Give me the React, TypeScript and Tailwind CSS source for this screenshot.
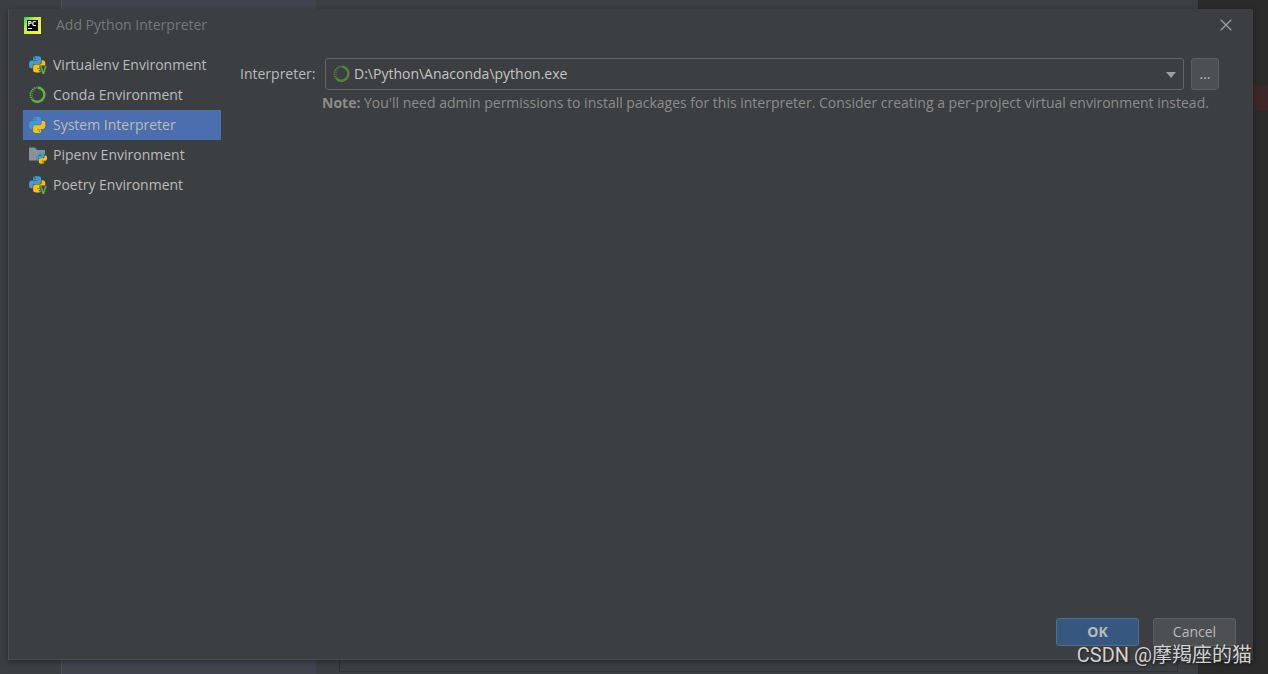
import React, { useState } from 'react';
import { X } from 'lucide-react';
import { clsx } from 'clsx';

type IconType = 'virtualenv' | 'conda' | 'system' | 'pipenv';

interface EnvironmentItem {
  id: string;
  label: string;
  icon: IconType;
}

const ENVIRONMENTS: EnvironmentItem[] = [
  { id: 'virtualenv', label: 'Virtualenv Environment', icon: 'virtualenv' },
  { id: 'conda', label: 'Conda Environment', icon: 'conda' },
  { id: 'system', label: 'System Interpreter', icon: 'system' },
  { id: 'pipenv', label: 'Pipenv Environment', icon: 'pipenv' },
  { id: 'poetry', label: 'Poetry Environment', icon: 'virtualenv' },
];

const SNAKE_TOP =
  'M14.25.18l.9.2.73.26.59.3.45.32.34.34.25.34.16.33.1.3.04.26.02.2-.01.13V8.5l-.05.63-.13.55-.21.46-.26.38-.3.31-.33.25-.35.19-.35.14-.33.1-.3.07-.26.04-.21.02H8.77l-.69.05-.59.14-.5.22-.41.27-.33.32-.27.35-.2.36-.15.37-.1.35-.07.32-.04.27-.02.21v3.06H3.17l-.21-.03-.28-.07-.32-.12-.35-.18-.36-.26-.36-.36-.35-.46-.32-.59-.28-.73-.21-.88-.14-1.05-.05-1.23.06-1.22.16-1.04.24-.87.32-.71.36-.57.4-.44.42-.33.42-.24.4-.16.36-.1.32-.05.24-.01h.16l.06.01h8.16v-.83H6.18l-.01-2.75-.02-.37.05-.34.11-.31.17-.28.25-.26.31-.23.38-.2.44-.18.51-.15.58-.12.64-.1.71-.06.77-.04.84-.02 1.27.05zm-6.3 1.98l-.23.33-.08.41.08.41.23.34.33.22.41.09.41-.09.33-.22.23-.34.08-.41-.08-.41-.23-.33-.33-.22-.41-.09-.41.09z';

const SNAKE_BOTTOM =
  'M21.04 6.11l.28.06.32.12.35.18.36.27.36.35.35.47.32.59.28.73.21.88.14 1.04.05 1.23-.06 1.23-.16 1.04-.24.86-.32.71-.36.57-.4.45-.42.33-.42.24-.4.16-.36.09-.32.05-.24.02-.16-.01h-8.22v.82h5.84l.01 2.76.02.36-.05.34-.11.31-.17.29-.25.25-.31.24-.38.2-.44.17-.51.15-.58.13-.64.09-.71.07-.77.04-.84.01-1.27-.04-1.07-.14-.9-.2-.73-.25-.59-.3-.45-.33-.34-.34-.25-.34-.16-.33-.1-.3-.04-.25-.02-.2.01-.13v-5.34l.05-.64.13-.54.21-.46.26-.38.3-.32.33-.24.35-.2.35-.14.33-.1.3-.06.26-.04.21-.02.13-.01h5.84l.69-.05.59-.14.5-.21.41-.28.33-.32.27-.35.2-.36.15-.36.1-.35.07-.32.04-.28.02-.21V6.07h2.09l.14.01zm-6.47 14.25l-.23.33-.08.41.08.41.23.33.33.23.41.08.41-.08.33-.23.23-.33.08-.41-.08-.41-.23-.33-.33-.23-.41-.08-.41.08z';

const Snakes: React.FC<{ transform?: string }> = ({ transform }) => (
  <g transform={transform}>
    <path d={SNAKE_TOP} fill="#3f9bd0" />
    <path d={SNAKE_BOTTOM} fill="#fac30b" />
  </g>
);

const CondaRing: React.FC<{ className?: string }> = ({ className }) => (
  <svg viewBox="0 0 18 18" className={className} fill="none" aria-hidden="true">
    <path d="M8.6 1.7A7 7 0 1 1 3.6 13.8" stroke="#62b543" strokeWidth="2.3" />
    <path d="M3.6 13.8A7 7 0 0 1 7.8 1.7" stroke="#62b543" strokeWidth="1.8" strokeDasharray="1.4 0.8" />
    <path d="M4.6 12.2A5.4 5.4 0 0 1 6 3.8" stroke="#62b543" strokeWidth="0.9" strokeDasharray="1 1.2" />
  </svg>
);

const EnvironmentIcon: React.FC<{ type: IconType }> = ({ type }) => {
  if (type === 'conda') {
    return <CondaRing className="size-[18px] shrink-0" />;
  }

  return (
    <svg viewBox="0 0 18 18" className="size-[18px] shrink-0 overflow-visible" aria-hidden="true">
      {type === 'pipenv' && (
        <>
          <path d="M0 1.5h6l2 2.4h8v4.4h-5.2L7.4 11v3.5H0z" fill="#87939a" />
          <Snakes transform="translate(7 6.6) scale(.46)" />
        </>
      )}
      {type === 'system' && <Snakes transform="translate(0 .8) scale(.68)" />}
      {type === 'virtualenv' && (
        <>
          <Snakes transform="translate(0 .2) scale(.68)" />
          {/* clears the corner under the badge */}
          <path d="M10.2 9.6h8v9h-6z" fill="#3c3f41" />
          <text x="11" y="17.6" fontSize="10" fontWeight="700" fill="#5fb347" fontFamily="Open Sans, sans-serif">
            V
          </text>
        </>
      )}
    </svg>
  );
};

const PyCharmIcon: React.FC = () => (
  <svg viewBox="0 0 17 17" className="size-[17px] shrink-0" aria-hidden="true">
    <defs>
      <linearGradient id="pycharm" x1="0" y1="0" x2="1" y2="1">
        <stop offset="0" stopColor="#21d760" />
        <stop offset="0.35" stopColor="#c3ec35" />
        <stop offset="1" stopColor="#fcf84a" />
      </linearGradient>
    </defs>
    <rect width="17" height="17" fill="url(#pycharm)" />
    <rect x="3" y="3" width="11" height="11" fill="#000" />
    <text x="3.4" y="8.8" fontSize="7" fontWeight="700" fill="#fff" fontFamily="Open Sans, sans-serif">
      PC
    </text>
    <rect x="4" y="11" width="4" height="1" fill="#fff" />
  </svg>
);

// The IDE window that stays visible around the dialog
const IdeBackdrop: React.FC = () => (
  <div className="absolute inset-0 flex bg-[#2b2b2b]" aria-hidden="true">
    <div className="flex flex-1 bg-[#3c3f41]">
      <div className="w-[62px] border-r border-[#515355]" />
      <div className="w-[254px] bg-[#41444f]" />
      <div className="w-[23px]" />
      <div className="mt-10 mb-[2px] mr-5 flex-1 border border-[#303234]" />
    </div>
    <div className="w-[70px] pt-[86px]">
      <div className="h-[25px] bg-[#3e2728]" />
    </div>
  </div>
);

const App: React.FC = () => {
  const [selected, setSelected] = useState('system');

  return (
    <div className="relative flex h-screen overflow-hidden pt-[9px] pr-[15px] pb-[14px] pl-2 font-['Open_Sans','Noto_Sans_CJK_SC',sans-serif] text-sm text-[#bbbbbb]">
      <IdeBackdrop />

      <div
        role="dialog"
        aria-labelledby="dialog-title"
        className="relative flex flex-1 flex-col border-b border-l border-[#4b4d4f] bg-[#3c3f41] shadow-[0_2px_6px_rgba(0,0,0,0.35)]"
      >
        {/* Title bar */}
        <header className="flex h-8 items-center pr-[19px] pl-[15px]">
          <PyCharmIcon />
          <h1 id="dialog-title" className="ml-[15px] flex-1 text-[#777879]">
            Add Python Interpreter
          </h1>
          <button type="button" aria-label="Close" className="text-[#a0a2a3]">
            <X className="size-4 scale-125" strokeWidth={1.4} />
          </button>
        </header>

        <div className="flex flex-1 pr-[34px] pl-[14px]">
          {/* Environment types */}
          <nav className="w-[198px] shrink-0 pt-[9px]">
            {ENVIRONMENTS.map((item) => (
              <button
                key={item.id}
                type="button"
                onClick={() => setSelected(item.id)}
                className={clsx(
                  'flex h-[30px] w-full items-center gap-1.5 pl-1.5 whitespace-nowrap',
                  selected === item.id && 'bg-[#4b6eaf]'
                )}
              >
                <EnvironmentIcon type={item.icon} />
                <span>{item.label}</span>
              </button>
            ))}
          </nav>

          {/* Interpreter form */}
          <main className="min-w-0 flex-1 pt-[17px] pl-[19px]">
            <div className="flex items-center">
              <label htmlFor="interpreter" className="w-[85px] shrink-0">
                Interpreter:
              </label>
              <div className="relative flex-1">
                <CondaRing className="pointer-events-none absolute top-[7px] left-2 size-[18px] opacity-60" />
                <select
                  id="interpreter"
                  className="block h-8 w-full appearance-none rounded-[3px] border border-[#646668] bg-transparent pr-8 pl-7 text-[#c4c4c4] outline-none"
                >
                  <option>D:\Python\Anaconda\python.exe</option>
                </select>
                <svg
                  viewBox="0 0 10 6"
                  className="pointer-events-none absolute top-[14px] right-2 h-[6px] w-[10px]"
                  aria-hidden="true"
                >
                  <path d="M0 0h10L5 6z" fill="#9da0a2" />
                </svg>
              </div>
              <button
                type="button"
                aria-label="Browse"
                className="ml-[7px] h-8 w-7 rounded-[3px] border border-[#5e6062] bg-[#4c5052]"
              >
                ...
              </button>
            </div>
            <p className="pl-[82px] leading-[26px] whitespace-nowrap text-[#8c8c8c]">
              <b>Note:</b> You'll need admin permissions to install packages for this interpreter. Consider creating a
              per-project virtual environment instead.
            </p>
          </main>
        </div>

        <footer className="flex justify-end gap-[14px] pr-[17px] pb-[13px]">
          <button
            type="button"
            className="h-7 w-[83px] rounded-[3px] border border-[#4c708c] bg-[#365880] font-bold"
          >
            OK
          </button>
          <button type="button" className="h-7 w-[83px] rounded-[3px] border border-[#5e6060] bg-[#4c5052]">
            Cancel
          </button>
        </footer>
      </div>

      <span className="pointer-events-none absolute right-4 bottom-[5px] font-[Roboto,'Noto_Sans_CJK_SC',sans-serif] text-xl text-[#d2d2d2] [text-shadow:1px_1px_2px_#1c1c1c]">
        CSDN @摩羯座的猫
      </span>
    </div>
  );
};

export default App;
